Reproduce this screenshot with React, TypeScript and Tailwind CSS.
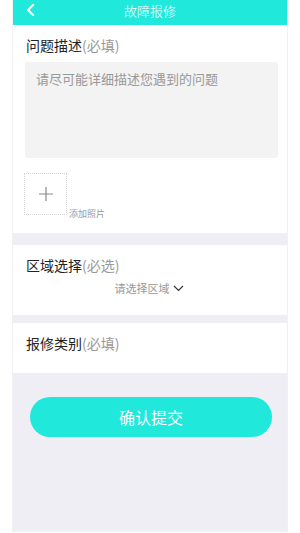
import React from "react";

export default function App() {
  return (
    <div
      className="w-[300px] h-[533px] bg-white overflow-hidden"
      style={{ fontFamily: '"Noto Sans CJK SC", "Noto Sans", sans-serif' }}
    >
      <div className="ml-[12px] w-[276px] h-[532px] flex flex-col border-x border-b border-[#f1f1f3] bg-[#efeef4]">
        {/* header */}
        <div className="h-[25px] bg-[#20e9dc] flex items-center relative shrink-0">
          <svg
            className="absolute left-[13px] top-[4px]"
            width="9"
            height="12"
            viewBox="0 0 9 12"
          >
            <path d="M7 1 L2 6 L7 11" stroke="white" strokeWidth="2.2" fill="none" strokeLinecap="round" strokeLinejoin="round" />
          </svg>
          <div className="w-full text-center text-white text-[13px] leading-[20px] -mt-[3px] font-light">故障报修</div>
        </div>

        {/* section 1 */}
        <div className="bg-white h-[208px] shrink-0 pt-[10px]">
          <div className="pl-[13px] text-[14px] leading-[20px] text-[#222]">
            问题描述<span className="text-[#999]">(必填)</span>
          </div>
          <div className="ml-[12px] mt-[7px] w-[253px] h-[96px] bg-[#f3f3f3] rounded-[2px] pl-[11px] pt-[8px] text-[13px] leading-[17px] text-[#999]">
            请尽可能详细描述您遇到的问题
          </div>
          <div className="flex items-end ml-[11px] mt-[15px]">
            <div className="w-[43px] h-[42px] border border-dotted border-[#d4d4d4] flex items-center justify-center">
              <svg width="14" height="14" viewBox="0 0 14 14">
                <path d="M7 0 V14 M0 7 H14" stroke="#8a8a8a" strokeWidth="1.2" />
              </svg>
            </div>
            <div className="ml-[2px] text-[9px] leading-[12px] text-[#999] -mb-[5px]">添加照片</div>
          </div>
        </div>

        <div className="h-[12px] shrink-0" />

        {/* section 2 */}
        <div className="bg-white h-[70px] shrink-0 pt-[10px]">
          <div className="pl-[13px] text-[14px] leading-[20px] text-[#222]">
            区域选择<span className="text-[#999]">(必选)</span>
          </div>
          <div className="flex items-center justify-center mt-[6px] text-[11px] leading-[14px] text-[#999] pr-[2px]">
            请选择区域
            <svg className="ml-[3px]" width="11" height="7" viewBox="0 0 11 7">
              <path d="M1 1 L5.5 5.5 L10 1" stroke="#333" strokeWidth="1.2" fill="none" />
            </svg>
          </div>
        </div>

        <div className="h-[8px] shrink-0" />

        {/* section 3 */}
        <div className="bg-white h-[50px] shrink-0 pt-[10px]">
          <div className="pl-[13px] text-[14px] leading-[20px] text-[#222]">
            报修类别<span className="text-[#999]">(必填)</span>
          </div>
        </div>

        {/* footer */}
        <div className="flex-1 pt-[24px] px-[17px]">
          <button className="w-[242px] h-[40px] rounded-full bg-[#20e9dc] text-white text-[16px] leading-[20px] flex items-center justify-center">
            确认提交
          </button>
        </div>
      </div>
    </div>
  );
}
